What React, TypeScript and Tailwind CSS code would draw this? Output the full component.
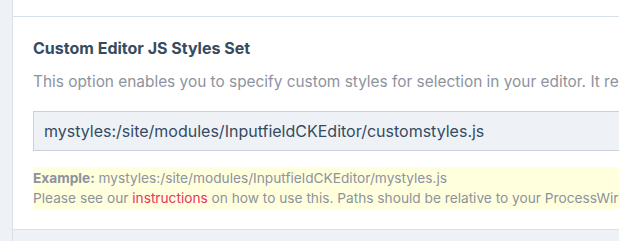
export default function App() {
  return (
    <div className="flex h-[241px] w-[619px] overflow-hidden bg-[#eef1f6] font-['Inter',sans-serif]">
      <div className="w-3 shrink-0" />
      <div className="flex min-w-0 flex-1 flex-col border-l border-[#d8e0ea]">
        <div className="h-4 shrink-0 bg-white" />
        <section className="shrink-0 border-y border-[#d8e0ea] bg-white pb-5 pl-5 pt-5">
          <h2 className="text-[16px] leading-[22px] font-bold whitespace-nowrap text-[#354b60]">
            Custom Editor JS Styles Set
          </h2>
          <p className="mt-[11px] text-[15.4px] leading-6 whitespace-nowrap text-[#8d939e]">
            This option enables you to specify custom styles for selection in your editor. It requires
          </p>
          <div className="mt-[17px] flex h-10 items-center border border-r-0 border-[#c6d1dd] bg-[#eef2f7] px-[10px] text-[16px] whitespace-nowrap text-[#354b60]">
            mystyles:/site/modules/InputfieldCKEditor/customstyles.js
          </div>
          <div className="mt-4 bg-[#ffffdd] py-px text-[13.7px] leading-5 whitespace-nowrap text-[#8d939e]">
            <p>
              <strong className="font-bold">Example:</strong> mystyles:/site/modules/InputfieldCKEditor/mystyles.js
            </p>
            <p>
              Please see our <a href="#" className="text-[#e83561]">instructions</a> on how to use this. Paths should be relative to your ProcessWire installation root.
            </p>
          </div>
        </section>
      </div>
    </div>
  );
}
